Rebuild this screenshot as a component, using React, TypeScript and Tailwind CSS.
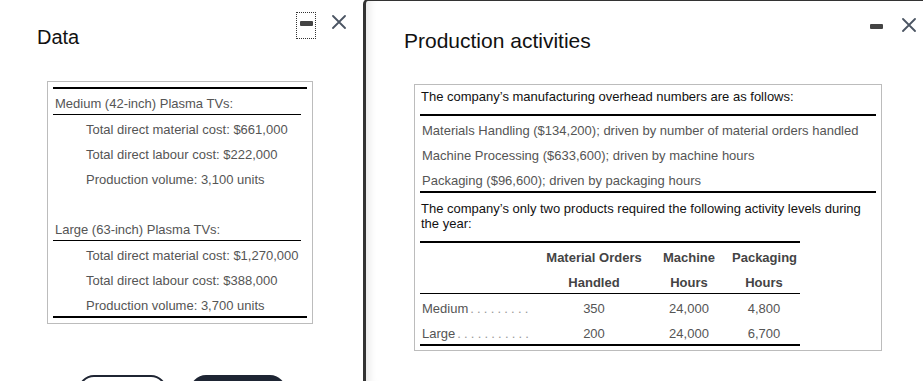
import type { ReactNode } from "react";

function CloseIcon({ className }: { className?: string }) {
  return (
    <svg viewBox="0 0 14 14" className={className} fill="none">
      <path d="M1 1 L13 13 M13 1 L1 13" stroke="#4b5563" strokeWidth="1.8" strokeLinecap="round" />
    </svg>
  );
}

function Row({ children, indent = false }: { children?: ReactNode; indent?: boolean }) {
  return (
    <div className={`h-[25px] pt-[5px] leading-[20px] whitespace-nowrap ${indent ? "pl-[33px]" : "pl-[2px]"}`}>
      {children}
    </div>
  );
}

const medium = [
  "Total direct material cost: $661,000",
  "Total direct labour cost: $222,000",
  "Production volume: 3,100 units",
];

const large = [
  "Total direct material cost: $1,270,000",
  "Total direct labour cost: $388,000",
  "Production volume: 3,700 units",
];

const overhead = [
  "Materials Handling ($134,200); driven by number of material orders handled",
  "Machine Processing ($633,600); driven by machine hours",
  "Packaging ($96,600); driven by packaging hours",
];

function DataPanel() {
  return (
    <div className="w-[363px] shrink-0 bg-white">
      <div className="flex items-start">
        <h2 className="pl-[37px] pt-[27px] text-[20px] leading-[20px] text-[#111]">Data</h2>
        <div className="ml-auto mr-[17px] mt-[12px] flex items-start gap-[16px]">
          <div className="flex h-[27px] w-[20px] items-center justify-center border border-dotted border-[#333]">
            <span className="mt-[-4px] h-[5px] w-[13px] rounded-[1px] bg-[#444]" />
          </div>
          <CloseIcon className="mt-[3px] h-[14px] w-[14px]" />
        </div>
      </div>

      <div className="ml-[47px] mt-[34px] w-[266px] border border-[#bcbcbc] px-[5px] pt-[5px] pb-[5px] text-[13px] text-[#555]">
        <div className="border-t-2 border-black">
          <div className="w-[248px] border-b border-black">
            <Row>Medium (42-inch) Plasma TVs:</Row>
          </div>
          {medium.map((t) => (
            <Row key={t} indent>
              {t}
            </Row>
          ))}
          <Row />
          <div className="w-[248px] border-b border-black">
            <Row>Large (63-inch) Plasma TVs:</Row>
          </div>
          {large.map((t) => (
            <Row key={t} indent>
              {t}
            </Row>
          ))}
        </div>
        <div className="border-t-2 border-black" />
      </div>

      <div className="mt-[51px] flex gap-[23px] pl-[78px]">
        <div className="h-[32px] w-[89px] rounded-[16px] border-2 border-[#1f2533]" />
        <div className="h-[32px] w-[96px] rounded-[16px] bg-[#1e2533]" />
      </div>
    </div>
  );
}

function ActivitiesPanel() {
  const cols = "grid grid-cols-[120px_106px_84px_66px]";
  return (
    <div className="-mt-px flex-1 rounded-tl-[5px] border-l-[3px] border-t-2 border-[#333] bg-white shadow-[inset_10px_0_10px_-8px_rgba(0,0,0,0.12)]">
      <div className="flex items-start">
        <h2 className="pl-[38px] pt-[29px] text-[21px] leading-[21px] text-[#111]">Production activities</h2>
        <div className="ml-auto mr-[7px] mt-[17px] flex items-start gap-[19px]">
          <span className="mt-[6px] h-[5px] w-[13px] rounded-[1px] bg-[#444]" />
          <CloseIcon className="h-[14px] w-[14px]" />
        </div>
      </div>

      <div className="ml-[48px] mt-[33px] w-[468px] border border-[#bcbcbc] px-[5px] pb-[4px] text-[13px] text-[#555]">
        <div className="pl-px pt-[2px] pb-[7px] leading-[20px] text-[#111]">
          The company’s manufacturing overhead numbers are as follows:
        </div>
        <div className="border-t-2 border-black">
          {overhead.map((t) => (
            <Row key={t}>{t}</Row>
          ))}
        </div>
        <div className="border-t-2 border-black">
          <p className="w-[448px] pl-px pt-[8px] leading-[15px] text-[#111]">
            The company’s only two products required the following activity levels during the year:
          </p>
        </div>

        <div className="mt-[10px] w-[380px] border-y-2 border-black">
          <div className="border-b border-black font-bold text-[#444]">
            <div className={cols}>
              <div />
              <Row>
                <div className="text-center">Material Orders</div>
              </Row>
              <Row>
                <div className="text-center">Machine</div>
              </Row>
              <Row>
                <div className="text-center">Packaging</div>
              </Row>
            </div>
            <div className={cols}>
              <div />
              <Row>
                <div className="text-center">Handled</div>
              </Row>
              <Row>
                <div className="text-center">Hours</div>
              </Row>
              <Row>
                <div className="text-center">Hours</div>
              </Row>
            </div>
          </div>
          {[
            { name: "Medium", dots: ".........", v: ["350", "24,000", "4,800"] },
            { name: "Large", dots: "...........", v: ["200", "24,000", "6,700"] },
          ].map((r) => (
            <div key={r.name} className={cols}>
              <Row>
                {r.name}
                <span className="pl-[2px] tracking-[3.2px] text-[#999]">{r.dots}</span>
              </Row>
              {r.v.map((x, i) => (
                <Row key={i}>
                  <div className="text-center">{x}</div>
                </Row>
              ))}
            </div>
          ))}
        </div>
      </div>
    </div>
  );
}

export default function App() {
  return (
    <main className="flex h-[381px] w-[923px] overflow-hidden bg-white font-['Liberation_Sans',Arial,sans-serif]">
      <DataPanel />
      <ActivitiesPanel />
    </main>
  );
}
